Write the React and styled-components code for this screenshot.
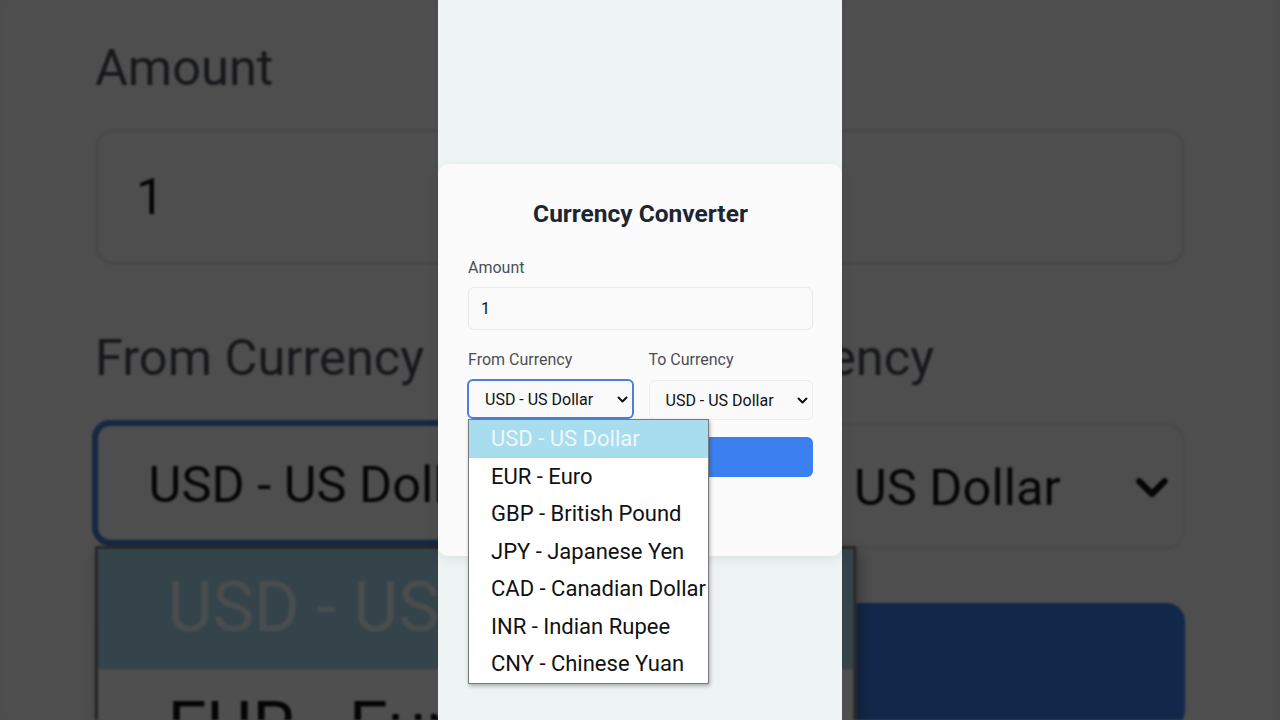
import React from "react";
import styled, { createGlobalStyle } from "styled-components";

const currencies = [
  "USD - US Dollar",
  "EUR - Euro",
  "GBP - British Pound",
  "JPY - Japanese Yen",
  "CAD - Canadian Dollar",
  "INR - Indian Rupee",
  "CNY - Chinese Yuan",
];

const GlobalStyle = createGlobalStyle`
  body {
    margin: 0;
    background: #4d4d4d;
    overflow: hidden;
  }
  * {
    box-sizing: border-box;
  }
`;

function Chevron() {
  return (
    <svg width="11" height="7" viewBox="0 0 11 7" fill="none">
      <path d="M1.5 1.5l4 4 4-4" stroke="#111" strokeWidth="2" strokeLinecap="round" strokeLinejoin="round" />
    </svg>
  );
}

function CurrencySelect({ label, focused, open }) {
  return (
    <Field>
      <Label>{label}</Label>
      <SelectWrap>
        <SelectBox $focused={focused}>
          <span>USD - US Dollar</span>
          <Chevron />
        </SelectBox>
        {open && (
          <Menu>
            {currencies.map((c, i) => (
              <MenuItem key={c} $active={i === 0}>
                {c}
              </MenuItem>
            ))}
          </Menu>
        )}
      </SelectWrap>
    </Field>
  );
}

function Scene() {
  return (
    <Frame>
      <Column>
        <Card>
          <Title>Currency Converter</Title>
          <Field>
            <Label>Amount</Label>
            <AmountInput value="1" readOnly />
          </Field>
          <Row>
            <CurrencySelect label="From Currency" focused open />
            <CurrencySelect label="To Currency" />
          </Row>
          <ConvertButton>Convert</ConvertButton>
          <Result />
        </Card>
      </Column>
    </Frame>
  );
}

export default function App() {
  return (
    <>
      <GlobalStyle />
      <Stage>
        <Backdrop>
          <Zoomed>
            <Scene />
          </Zoomed>
        </Backdrop>
        <Foreground>
          <Scene />
        </Foreground>
      </Stage>
    </>
  );
}

const Stage = styled.div`
  display: grid;
  width: 1280px;
  height: 720px;
  overflow: hidden;
  background: #4d4d4d;
  & > * {
    grid-area: 1 / 1;
  }
`;

// the video frame: same screen, zoomed in and dimmed behind the phone column
const Backdrop = styled.div`
  overflow: hidden;
  filter: brightness(0.31) blur(1.2px);
`;

const Zoomed = styled.div`
  width: 1280px;
  height: 720px;
  transform-origin: 0 0;
  transform: translate(-1384px, -778px) scale(3.16);
`;

const Foreground = styled.div`
  position: relative;
  z-index: 1;
`;

const Frame = styled.div`
  display: flex;
  justify-content: center;
  height: 720px;
  font-family: Roboto, "Liberation Sans", sans-serif;
`;

const Column = styled.div`
  width: 404px;
  height: 720px;
  background: #eef3f3;
  padding-top: 164px;
`;

const Card = styled.div`
  background: #fbfbfb;
  border-radius: 10px;
  padding: 37px 29px 30px 30px;
  box-shadow: 0 4px 12px rgba(0, 0, 0, 0.07);
`;

const Title = styled.h2`
  margin: 0 0 31px;
  text-align: center;
  font-size: 24.5px;
  line-height: 26px;
  font-weight: 700;
  color: #1c2533;
`;

const Field = styled.div`
  display: flex;
  flex-direction: column;
  gap: 10px;
  min-width: 0;
`;

const Label = styled.label`
  font-size: 16px;
  line-height: 19px;
  color: #4a4f57;
`;

const AmountInput = styled.input`
  height: 43px;
  width: 100%;
  padding: 0 12px;
  border: 1px solid #e6e8ea;
  border-radius: 6px;
  background: #fafafa;
  font-family: inherit;
  font-size: 16px;
  color: #111;
  outline: none;
`;

const Row = styled.div`
  display: grid;
  grid-template-columns: 1fr 1fr;
  gap: 16px;
  margin-top: 20px;
`;

const SelectWrap = styled.div`
  position: relative;
  margin-top: 1px;
`;

const SelectBox = styled.div`
  display: flex;
  align-items: center;
  justify-content: space-between;
  height: 40px;
  padding: 0 4px 0 16px;
  border: ${(p) => (p.$focused ? "2px solid #4a80d8" : "1px solid #eceeef")};
  border-radius: 6px;
  background: #fafafa;
  font-size: 16px;
  color: #111;
  margin: ${(p) => (p.$focused ? "-1px -1px 0" : "0")};
  white-space: nowrap;
`;

const Menu = styled.div`
  position: absolute;
  top: 100%;
  left: 0;
  z-index: 5;
  width: 241px;
  background: #fff;
  border: 1px solid #7a7a7a;
  box-shadow: 1px 2px 4px rgba(0, 0, 0, 0.3);
`;

const MenuItem = styled.div`
  height: 37.5px;
  display: flex;
  align-items: center;
  padding-left: 22px;
  font-size: 22px;
  white-space: nowrap;
  color: ${(p) => (p.$active ? "#eef8fc" : "#111")};
  background: ${(p) => (p.$active ? "#a8dcef" : "transparent")};
`;

const ConvertButton = styled.button`
  display: block;
  width: 100%;
  height: 40px;
  margin-top: 17px;
  border: none;
  border-radius: 6px;
  background: #3b80ee;
  color: #fff;
  font-family: inherit;
  font-size: 16px;
  font-weight: 500;
`;

const Result = styled.div`
  margin-top: 25px;
  min-height: 24px;
`;
